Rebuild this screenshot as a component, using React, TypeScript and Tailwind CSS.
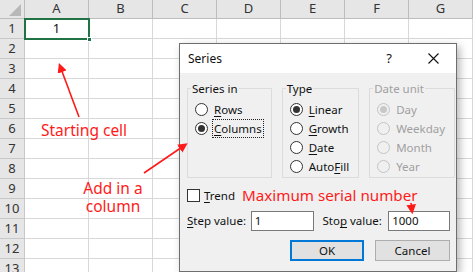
import React from "react";

const cols = ["A", "B", "C", "D", "E", "F", "G"];
const rows = Array.from({ length: 13 }, (_, i) => i + 1);

const ui = { fontFamily: '"Noto Sans", "Open Sans", sans-serif' };

function Radio({ checked = false, disabled = false }: { checked?: boolean; disabled?: boolean }) {
  return (
    <span
      className={
        disabled
          ? "flex h-[13px] w-[13px] shrink-0 items-center justify-center rounded-full border border-[#c4c4c4] bg-[#f0f0f0]"
          : "flex h-[13px] w-[13px] shrink-0 items-center justify-center rounded-full border border-[#333333] bg-white"
      }
    >
      {checked && (
        <span className={disabled ? "h-[7px] w-[7px] rounded-full bg-[#c8c8c8]" : "h-[7px] w-[7px] rounded-full bg-[#333333]"} />
      )}
    </span>
  );
}

function Option({ label, hot, checked, disabled, focus }: { label: string; hot?: number; checked?: boolean; disabled?: boolean; focus?: boolean }) {
  const text =
    hot === undefined ? (
      label
    ) : (
      <>
        {label.slice(0, hot)}
        <span className="underline underline-offset-2">{label[hot]}</span>
        {label.slice(hot + 1)}
      </>
    );
  return (
    <div className="flex h-[19px] items-center gap-[4px]">
      <Radio checked={checked} disabled={disabled} />
      <span
        className={
          (focus ? "border border-dotted border-[#222] px-[1px] " : "px-[2px] ") +
          (disabled ? "text-[#a0a0a0]" : "text-[#111]")
        }
      >
        {text}
      </span>
    </div>
  );
}

function Group({ title, width, disabled, children }: { title: string; width: string; disabled?: boolean; children: React.ReactNode }) {
  return (
    <fieldset className={`${width} h-[98px] border border-[#dcdcdc] px-[7px]`}>
      <legend className={disabled ? "ml-[-4px] px-[1px] text-[#a0a0a0]" : "ml-[-4px] px-[1px] text-[#111]"}>{title}</legend>
      <div className="mt-[3px] flex flex-col">{children}</div>
    </fieldset>
  );
}

function Sheet() {
  return (
    <div className="flex flex-col" style={{ fontFamily: '"Noto Sans", "Liberation Sans", sans-serif' }}>
      <div className="flex h-[19px] bg-[#e6e6e6]">
        <div className="relative w-[25px] border-r border-b border-[#bdbdbd]">
          <svg width="25" height="19" className="block">
            <polygon points="9,16 21,16 21,4" fill="#b8b8b8" />
          </svg>
        </div>
        {cols.map((c) => (
          <div
            key={c}
            className="flex w-[64px] shrink-0 items-center justify-center border-r border-b border-[#bdbdbd] text-[13px] text-[#333]"
          >
            {c}
          </div>
        ))}
      </div>
      {rows.map((r) => (
        <div key={r} className="flex h-[20px]">
          <div className="flex w-[25px] shrink-0 items-center justify-center border-r border-b border-[#c8c8c8] bg-[#e6e6e6] text-[13px] text-[#333]">
            {r}
          </div>
          {cols.map((c) => (
            <div key={c} className="flex w-[64px] shrink-0 items-center justify-center border-r border-b border-[#d8d8d8] text-[13px] text-[#111]">
              {r === 1 && c === "A" ? "1" : ""}
            </div>
          ))}
        </div>
      ))}
    </div>
  );
}

function Dialog() {
  return (
    <div
      className="absolute left-[179px] top-[43px] flex h-[229px] w-[278px] flex-col border border-[#6e6e6e] bg-[#f0f0f0] text-[11.5px] shadow-[3px_3px_8px_rgba(0,0,0,0.28)]"
      style={ui}
    >
      <div className="flex h-[29px] items-center bg-white pl-[8px] pr-[17px] text-[#111]">
        <span className="flex-1 text-[12px]">Series</span>
        <span className="mr-[36px] text-[13px]">?</span>
        <svg width="11" height="11" viewBox="0 0 11 11">
          <path d="M0.5 0.5 L10.5 10.5 M10.5 0.5 L0.5 10.5" stroke="#111" strokeWidth="1.1" />
        </svg>
      </div>
      <div className="flex flex-col pl-[7px] pr-[6px] pt-[7px]">
        <div className="flex gap-[10px]">
          <Group title="Series in" width="w-[81px]">
            <Option label="Rows" hot={0} />
            <Option label="Columns" hot={0} checked focus />
          </Group>
          <Group title="Type" width="w-[77px]">
            <Option label="Linear" hot={0} checked />
            <Option label="Growth" hot={0} />
            <Option label="Date" hot={0} />
            <Option label="AutoFill" hot={4} />
          </Group>
          <Group title="Date unit" width="w-[85px]" disabled>
            <Option label="Day" checked disabled />
            <Option label="Weekday" disabled />
            <Option label="Month" disabled />
            <Option label="Year" disabled />
          </Group>
        </div>
        <div className="mt-[11px] flex h-[13px] items-center gap-[4px]">
          <span className="h-[13px] w-[13px] border border-[#333333] bg-white" />
          <span className="text-[#111]">
            <span className="underline underline-offset-2">T</span>rend
          </span>
        </div>
        <div className="mt-[9px] flex h-[20px] items-center text-[#111]">
          <span className="w-[64px]">
            <span className="underline underline-offset-2">S</span>tep value:
          </span>
          <div className="flex h-[20px] w-[63px] items-center border border-[#7a7a7a] bg-white px-[3px]">1</div>
          <span className="ml-[9px] w-[66px]">
            Sto<span className="underline underline-offset-2">p</span> value:
          </span>
          <div className="flex h-[20px] w-[62px] items-center border border-[#7a7a7a] bg-white px-[3px]">1000</div>
        </div>
        <div className="mt-[9px] flex justify-end gap-[11px] text-[#111]">
          <button className="flex h-[21px] w-[74px] items-center justify-center border-2 border-[#0078d7] bg-[#e1e1e1]">OK</button>
          <button className="flex h-[21px] w-[75px] items-center justify-center border border-[#adadad] bg-[#e1e1e1]">Cancel</button>
        </div>
      </div>
    </div>
  );
}

export default function App() {
  const note = { fontFamily: '"Noto Sans", "Open Sans", sans-serif' };
  return (
    <div className="relative h-[272px] w-[473px] overflow-hidden bg-white">
      <Sheet />
      {/* selected cell A1 */}
      <div className="absolute left-[24px] top-[18px] h-[22px] w-[66px] border-2 border-[#217346]" />
      <div className="absolute left-[87px] top-[37px] h-[5px] w-[5px] border border-white bg-[#217346]" />

      <Dialog />

      <div className="absolute left-[41px] top-[119px] text-[15.5px] leading-[22px] text-[#ff1a1a]" style={note}>
        Starting cell
      </div>
      <div className="absolute left-[78px] top-[179px] w-[70px] text-center text-[15.5px] leading-[18px] text-[#ff1a1a]" style={note}>
        Add in a column
      </div>
      <div className="absolute left-[242px] top-[184px] text-[15.2px] leading-[22px] text-[#ff1a1a]" style={note}>
        Maximum serial number
      </div>

      <svg className="pointer-events-none absolute left-0 top-0" width="473" height="272">
        <defs>
          <marker id="ah" markerWidth="6" markerHeight="6" refX="4" refY="3" orient="auto" markerUnits="strokeWidth">
            <path d="M0,0 L6,3 L0,6 Z" fill="#ff1a1a" />
          </marker>
        </defs>
        <line x1="79" y1="117" x2="60" y2="66" stroke="#ff1a1a" strokeWidth="1.6" markerEnd="url(#ah)" />
        <line x1="144" y1="173" x2="185" y2="145" stroke="#ff1a1a" strokeWidth="1.6" markerEnd="url(#ah)" />
        <line x1="411" y1="203" x2="412" y2="211" stroke="#ff1a1a" strokeWidth="1.6" markerEnd="url(#ah)" />
      </svg>
    </div>
  );
}
